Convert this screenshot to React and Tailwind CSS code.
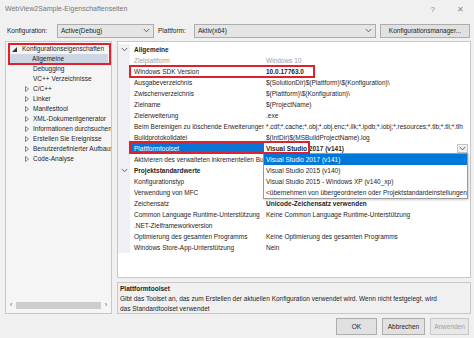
import React from 'react';

const font = { fontFamily: '"Liberation Sans", Arial, sans-serif' };

function Chevron({ className = '' }) {
  return (
    <svg width="7" height="5" viewBox="0 0 7 5" className={`shrink-0 ${className}`}>
      <polyline points="0.8,1 3.5,3.8 6.2,1" fill="none" stroke="#555" strokeWidth="0.9" />
    </svg>
  );
}

function Combo({ text, className }) {
  return (
    <div className={`flex h-[14px] items-center justify-between border border-[#acacac] bg-[#e5e5e5] pl-[3px] pr-[3px] ${className}`}>
      <span>{text}</span>
      <Chevron />
    </div>
  );
}

const treeItems = [
  { label: 'Debugging' },
  { label: 'VC++ Verzeichnisse' },
  { label: 'C/C++', arrow: true },
  { label: 'Linker', arrow: true },
  { label: 'Manifesttool', arrow: true },
  { label: 'XML-Dokumentgenerator', arrow: true },
  { label: 'Informationen durchsuchen', arrow: true },
  { label: 'Erstellen Sie Ereignisse', arrow: true },
  { label: 'Benutzerdefinierter Aufbauschritt', arrow: true },
  { label: 'Code-Analyse', arrow: true },
];

const general = [
  ['Zielplattform', 'Windows 10', 'muted'],
  ['Windows SDK Version', '10.0.17763.0', 'bold'],
  ['Ausgabeverzeichnis', '$(SolutionDir)$(Plattform)\\$(Konfiguration)\\'],
  ['Zwischenverzeichnis', '$(Plattform)\\$(Konfiguration)\\'],
  ['Zielname', '$(ProjectName)'],
  ['Zielerweiterung', '.exe'],
  ['Beim Bereinigen zu löschende Erweiterungen', '*.cdf;*.cache;*.obj;*.obj.enc;*.ilk;*.ipdb;*.iobj;*.resources;*.tlb;*.tli;*.tlh'],
  ['Buildprotokolldatei', '$(IntDir)$(MSBuildProjectName).log'],
];

// values of the first rows are hidden behind the open dropdown
const defaults = [
  ['Konfigurationstyp', ''],
  ['Verwendung von MFC', ''],
  ['Zeichensatz', 'Unicode-Zeichensatz verwenden', 'bold'],
  ['Common Language Runtime-Unterstützung', 'Keine Common Language Runtime-Unterstützung'],
  ['.NET-Zielframeworkversion', ''],
  ['Optimierung des gesamten Programms', 'Keine Optimierung des gesamten Programms'],
  ['Windows Store-App-Unterstützung', 'Nein'],
];

function Row({ name, value, kind }) {
  return (
    <div className="flex h-[11px] items-center">
      <div className="h-full w-[12px] shrink-0 bg-[#eef0f5]" />
      <div className={`w-[134px] shrink-0 overflow-hidden whitespace-nowrap pl-[4px] ${kind === 'muted' ? 'text-[#a0a0a0]' : ''}`}>{name}</div>
      <div className={`flex-1 overflow-hidden whitespace-nowrap pl-[2px] ${kind === 'muted' ? 'text-[#a0a0a0]' : ''} ${kind === 'bold' ? 'font-bold' : ''}`}>{value}</div>
    </div>
  );
}

function Header({ label }) {
  return (
    <div className="flex h-[11px] items-center">
      <div className="flex h-full w-[12px] shrink-0 items-center justify-center bg-[#eef0f5]">
        <Chevron />
      </div>
      <div className="pl-[4px] font-bold">{label}</div>
    </div>
  );
}

export default function App() {
  return (
    <div style={font} className="relative flex h-[338px] w-[474px] flex-col overflow-hidden bg-[#f0f0f0] text-[6.5px] text-[#1e1e1e]">
      {/* title bar */}
      <div className="flex h-[19px] items-center justify-between pl-[5px] pr-[10px]">
        <span className="text-[7px] text-[#777]">WebView2Sample-Eigenschaftenseiten</span>
        <div className="flex items-center gap-[22px] text-[8px] text-[#888]">
          <span>?</span>
          <span>✕</span>
        </div>
      </div>

      {/* configuration row */}
      <div className="mt-[4px] flex h-[15px] items-center pl-[7px]">
        <span className="w-[50px]">Konfiguration:</span>
        <Combo text="Active(Debug)" className="w-[97px]" />
        <span className="ml-[4px] w-[36px]">Plattform:</span>
        <Combo text="Aktiv(x64)" className="w-[182px]" />
        <div className="ml-[4px] flex h-[14px] w-[90px] items-center justify-center border border-[#adadad] bg-[#e1e1e1]">
          Konfigurationsmanager...
        </div>
      </div>

      {/* main area */}
      <div className="mt-[3px] flex h-[273px] pl-[5px]">
        {/* tree */}
        <div className="flex w-[107px] flex-col overflow-hidden border border-[#c8c8c8] bg-[#f5f5f5] pt-[2px]">
          <div className="flex h-[10px] items-center whitespace-nowrap pl-[6px]">
            <svg width="5" height="5" viewBox="0 0 5 5" className="mr-[5px] shrink-0">
              <polygon points="5,0 5,5 0,5" fill="#333" />
            </svg>
            <span>Konfigurationseigenschaften</span>
          </div>
          <div className="mx-[3px] flex h-[10px] items-center bg-[#cfd6e3] pl-[23px]">Allgemeine</div>
          {treeItems.map((it) => (
            <div key={it.label} className="flex h-[10px] items-center whitespace-nowrap pl-[19px]">
              {it.arrow ? (
                <svg width="4" height="6" viewBox="0 0 4 6" className="mr-[4px] shrink-0">
                  <polygon points="0.5,0.5 3.5,3 0.5,5.5" fill="none" stroke="#555" strokeWidth="0.7" />
                </svg>
              ) : (
                <span className="w-[8px] shrink-0" />
              )}
              <span>{it.label}</span>
            </div>
          ))}
          <div className="flex-1" />
          <div className="mb-[3px] flex h-[9px] items-center px-[4px] text-[7px] text-[#666]">
            <span>‹</span>
            <div className="mx-[4px] h-[7px] flex-1 bg-[#cdcdcd]" />
            <span>›</span>
          </div>
        </div>

        {/* right column */}
        <div className="ml-[5px] flex w-[354px] flex-col">
          <div className="relative h-[237px] border border-[#c8c8c8] bg-white pt-[2px]">
            <Header label="Allgemeine" />
            {general.map(([n, v, k]) => (
              <Row key={n} name={n} value={v} kind={k} />
            ))}
            <div className="flex h-[11px] items-center">
              <div className="h-full w-[12px] shrink-0 bg-[#eef0f5]" />
              <div className="flex h-full w-[134px] shrink-0 items-center bg-[#0a74d4] pl-[4px] text-white">Plattformtoolset</div>
              <div className="flex h-full flex-1 items-center justify-between pl-[2px] pr-[2px] font-bold">
                <span>Visual Studio 2017 (v141)</span>
                <div className="flex h-[9px] w-[11px] items-center justify-center border border-[#c4c4c4] bg-[#f0f0f0]">
                  <Chevron />
                </div>
              </div>
            </div>
            <Row name="Aktivieren des verwalteten inkrementellen Builds" value="" />
            <Header label="Projektstandardwerte" />
            {defaults.map(([n, v, k]) => (
              <Row key={n} name={n} value={v} kind={k} />
            ))}

            {/* dropdown list */}
            <div className="absolute left-[145px] top-[111px] w-[205px] border border-[#9a9a9a] bg-white shadow-[1px_1px_2px_rgba(0,0,0,0.2)]">
              <div className="flex h-[11px] items-center bg-[#0078d7] pl-[2px] text-white">Visual Studio 2017 (v141)</div>
              <div className="flex h-[11px] items-center pl-[2px]">Visual Studio 2015 (v140)</div>
              <div className="flex h-[11px] items-center pl-[2px]">Visual Studio 2015 - Windows XP (v140_xp)</div>
              <div className="flex h-[11px] items-center overflow-hidden whitespace-nowrap pl-[2px]">&lt;übernehmen von übergeordneten oder Projektstandardeinstellungen&gt;</div>
            </div>

            {/* annotation boxes */}
            <div className="absolute left-[11px] top-[23px] h-[13px] w-[186px] border-2 border-[#e0202a]" />
            <div className="absolute left-[11px] top-[99px] h-[13px] w-[181px] border-2 border-[#e0202a]" />
          </div>

          <div className="mt-[4px] h-[32px] border border-[#c8c8c8] bg-[#f0f0f0] px-[2px] pt-[1px] leading-[10px]">
            <div className="font-bold">Plattformtoolset</div>
            <div>Gibt das Toolset an, das zum Erstellen der aktuellen Konfiguration verwendet wird. Wenn nicht festgelegt, wird</div>
            <div>das Standardtoolset verwendet</div>
          </div>
        </div>
      </div>

      {/* tree annotation */}
      <div className="absolute left-[8px] top-[43px] h-[22px] w-[103px] border-2 border-[#e0202a]" />

      {/* buttons */}
      <div className="mt-[4px] flex h-[17px] justify-end gap-[5px] pr-[5px]">
        <div className="flex w-[41px] items-center justify-center border border-[#adadad] bg-[#e1e1e1]">OK</div>
        <div className="flex w-[43px] items-center justify-center border border-[#adadad] bg-[#e1e1e1]">Abbrechen</div>
        <div className="flex w-[39px] items-center justify-center border border-[#c8c8c8] bg-[#e8e8e8] text-[#a0a0a0]">Anwenden</div>
      </div>
    </div>
  );
}
